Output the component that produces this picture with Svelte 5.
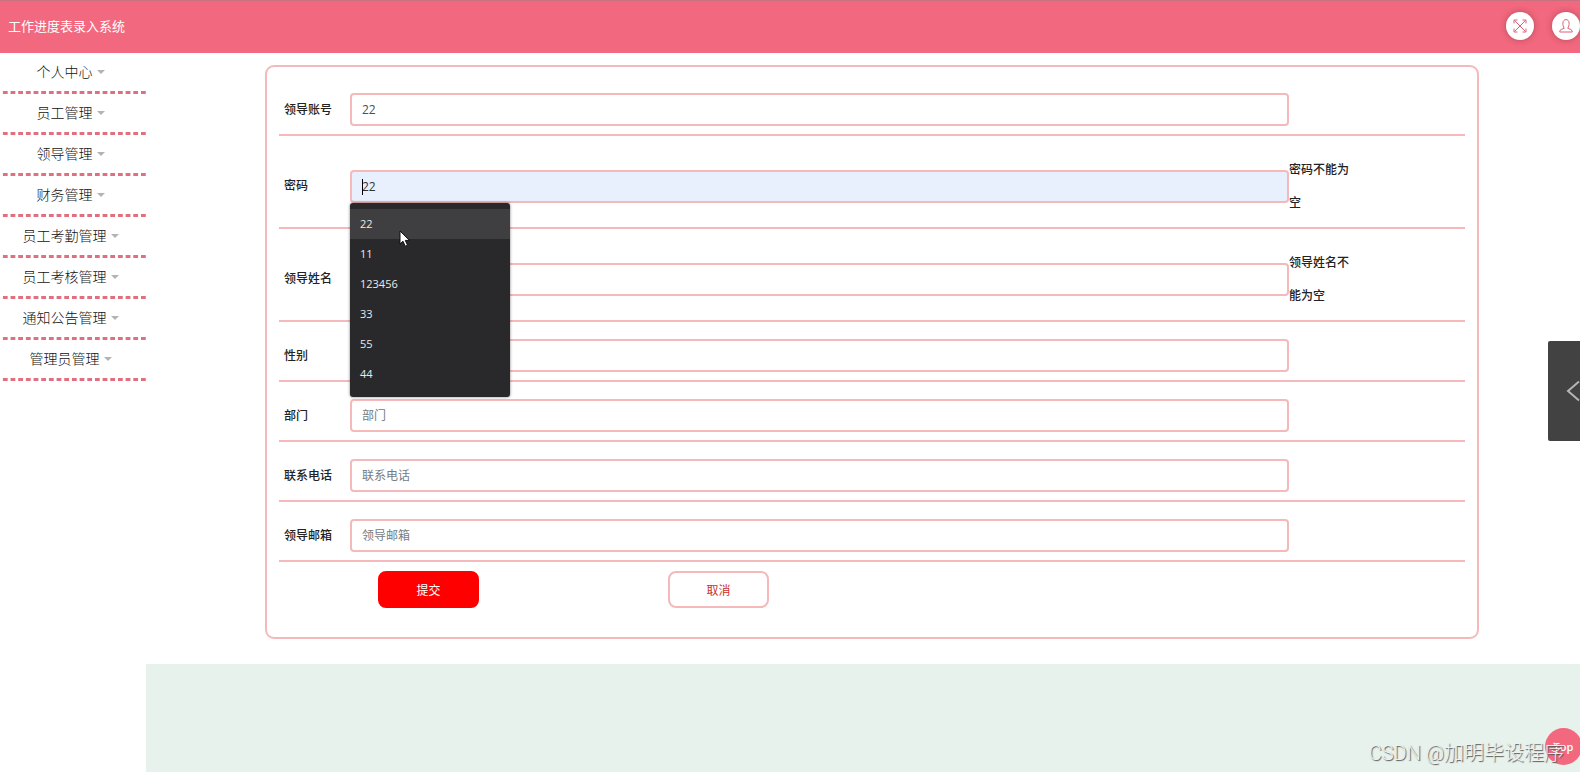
<script lang="ts">
  interface Field {
    id: string;
    label: string;
    value?: string;
    placeholder?: string;
    hint?: string;
    active?: boolean;
  }

  const MENU = ["个人中心", "员工管理", "领导管理", "财务管理", "员工考勤管理", "员工考核管理", "通知公告管理", "管理员管理"];
  const SUGGESTIONS = ["22", "11", "123456", "33", "55", "44"];

  let fields = $state<Field[]>([
    { id: "account", label: "领导账号", value: "22" },
    { id: "password", label: "密码", value: "22", hint: "密码不能为空", active: true },
    { id: "name", label: "领导姓名", value: "", hint: "领导姓名不能为空" },
    { id: "gender", label: "性别", value: "" },
    { id: "dept", label: "部门", value: "", placeholder: "部门" },
    { id: "phone", label: "联系电话", value: "", placeholder: "联系电话" },
    { id: "email", label: "领导邮箱", value: "", placeholder: "领导邮箱" },
  ]);

  let hovered = $state(0);

  function pick(field: Field, value: string) {
    field.value = value;
  }
</script>

<div class="page">
  <header class="topbar">
    <span class="brand">工作进度表录入系统</span>
    <div class="actions">
      <button type="button" class="round" aria-label="全屏">
        <svg viewBox="0 0 14 14" width="14" height="14">
          <path d="M1.5 1.5l11 11M12.5 1.5l-11 11M1 4.5V1h3.5M9.5 1H13v3.5M13 9.5V13H9.5M4.5 13H1V9.5" />
        </svg>
      </button>
      <button type="button" class="round" aria-label="用户">
        <svg viewBox="0 0 14 14" width="14" height="14">
          <path d="M5.300 9.300C4.300 8 3.800 6 3.900 4 4 1.900 5.200.6 7 .6s3 1.300 3.100 3.400c.1 2-.4 4-1.400 5.300l3.200 1.200c.9.4 1.300 1.200 1.400 2.500H.7c.1-1.300.5-2.100 1.400-2.500z" />
        </svg>
      </button>
    </div>
  </header>

  <div class="body">
    <nav class="sidebar">
      {#each MENU as item (item)}
        <a class="menu-item" href="#menu">{item}<i class="arrow"></i></a>
      {/each}
    </nav>

    <main class="main">
      <div class="sheet">
        <form class="card" onsubmit={(e) => e.preventDefault()}>
          {#each fields as field (field.id)}
            <div class="row">
              <label for={field.id}>{field.label}</label>
              <div class="control">
                <input id={field.id} class:active={field.active} type="text" autocomplete="off" placeholder={field.placeholder} bind:value={field.value} />
                {#if field.active}
                  <span class="text-caret"></span>
                  <ul class="suggest">
                    {#each SUGGESTIONS as s, i (s)}
                      <li>
                        <button type="button" class:hovered={hovered === i} onmouseenter={() => (hovered = i)} onclick={() => pick(field, s)}>{s}</button>
                      </li>
                    {/each}
                  </ul>
                  <svg class="pointer" viewBox="0 0 12 18" width="12" height="18">
                    <path d="M1 1v13l3-2.800 2.200 5 2.300-1-2.200-4.800h4.200z" />
                  </svg>
                {/if}
              </div>
              <span class="hint">{field.hint ?? ""}</span>
            </div>
          {/each}
          <div class="buttons">
            <button type="submit" class="btn submit">提交</button>
            <button type="button" class="btn cancel">取消</button>
          </div>
        </form>
      </div>
    </main>
  </div>

  <button type="button" class="drawer" aria-label="展开">
    <svg viewBox="0 0 14 22" width="14" height="22"><path d="M13 1.500L2 11l11 9.500" /></svg>
  </button>
  <a class="to-top" href="#top">Top</a>
  <div class="watermark">CSDN @加明毕设程序</div>
</div>

<style>
  :global(body) {
    margin: 0;
    overflow: hidden;
  }
  .page {
    --pink: #f2687e;
    --line: #f5b8bb;
    position: relative;
    display: flex;
    flex-direction: column;
    height: 100vh;
    overflow: hidden;
    background: #fff;
    color: #333;
    font-family: "Open Sans", "Noto Sans CJK SC", sans-serif;
    font-size: 12px;
  }
  button,
  input {
    font: inherit;
    box-sizing: border-box;
    margin: 0;
  }
  .topbar {
    display: flex;
    flex: none;
    align-items: center;
    justify-content: space-between;
    box-sizing: border-box;
    height: 53px;
    padding: 0 0 3px 8px;
    background: var(--pink);
    border-top: 1px solid #c9727f;
  }
  .brand {
    color: #fff;
    font-size: 13px;
  }
  .actions {
    display: flex;
    gap: 18px;
  }
  .round {
    display: grid;
    place-items: center;
    width: 28px;
    height: 28px;
    padding: 0;
    border: 0;
    border-radius: 50%;
    background: #fff;
    box-shadow: 0 0 6px rgba(90, 30, 40, 0.4);
  }
  .round svg {
    fill: none;
    stroke: #d9647a;
    stroke-width: 1;
  }
  .body {
    display: flex;
    flex: 1;
    min-height: 0;
  }
  .sidebar {
    flex: none;
    width: 146px;
  }
  .menu-item {
    display: flex;
    align-items: center;
    justify-content: center;
    gap: 4px;
    padding: 0 5px 3px 0;
    font-size: 14px;
    font-weight: 300;
    line-height: 38px;
    color: #111;
    text-decoration: none;
    background: linear-gradient(90deg, transparent 34%, #e0707f 34%) left bottom / calc(100% / 19) 3px repeat-x;
  }
  .arrow {
    border: 4px solid transparent;
    border-top-color: #b3b3b3;
    border-bottom: 0;
  }
  .main {
    flex: 1;
    min-width: 0;
    background: #e7f2ec;
  }
  .sheet {
    padding: 12px 101px 25px 119px;
    background: #fff;
  }
  .card {
    padding: 9px 12px 29px;
    border: 2px solid var(--line);
    border-radius: 9px;
  }
  .row {
    display: flex;
    align-items: center;
    padding: 17px 110px 8px 5px;
    border-bottom: 2px solid var(--line);
  }
  label {
    flex: none;
    width: 66px;
    color: #222;
    font-weight: 500;
    line-height: 16px;
  }
  .control {
    position: relative;
    flex: 1;
  }
  input {
    display: block;
    width: 100%;
    height: 33px;
    padding: 0 10px;
    border: 2px solid var(--line);
    border-radius: 4px;
    outline: 0;
    background: #fff;
    color: #495057;
  }
  input::placeholder {
    color: #757c83;
  }
  input.active {
    background: #e8f0fe;
    color: #333;
  }
  .hint {
    flex: none;
    width: 66px;
    line-height: 33px;
    color: #222;
    font-weight: 500;
  }
  .text-caret {
    position: absolute;
    top: 9px;
    left: 12px;
    width: 1px;
    height: 16px;
    background: #000;
  }
  .suggest {
    position: absolute;
    z-index: 2;
    top: 100%;
    left: 0;
    box-sizing: border-box;
    width: 160px;
    margin: 0;
    padding: 6px 0 8px;
    list-style: none;
    background: #29292b;
    border-radius: 3px;
    box-shadow: 0 0 3px rgba(0, 0, 0, 0.5);
  }
  .suggest button {
    display: block;
    width: 100%;
    height: 30px;
    padding: 0 10px;
    border: 0;
    background: none;
    color: #e8eaed;
    font-size: 11px;
    text-align: left;
  }
  .suggest button.hovered {
    background: #3f3f42;
  }
  .pointer {
    position: absolute;
    z-index: 3;
    top: 60px;
    left: 49px;
    fill: #fff;
    stroke: #111;
    pointer-events: none;
  }
  .buttons {
    display: flex;
    gap: 189px;
    padding: 9px 0 0 99px;
  }
  .btn {
    width: 101px;
    height: 37px;
    border: 2px solid var(--line);
    border-radius: 8px;
    background: #fff;
    color: #c9302c;
  }
  .btn.submit {
    border-color: #f00;
    background: #f00;
    color: #fff;
  }
  .drawer {
    position: absolute;
    top: 341px;
    right: 0;
    display: flex;
    align-items: center;
    justify-content: flex-end;
    width: 32px;
    height: 100px;
    padding: 0;
    border: 0;
    border-radius: 2px 0 0 2px;
    background: #424242;
  }
  .drawer svg {
    fill: none;
    stroke: #b5b5b5;
    stroke-width: 2;
  }
  .to-top {
    position: absolute;
    right: -2px;
    bottom: 7px;
    width: 37px;
    border-radius: 50%;
    background: var(--pink);
    color: #fff;
    font-size: 11px;
    font-weight: 600;
    line-height: 37px;
    text-align: center;
    text-decoration: none;
  }
  .watermark {
    position: absolute;
    right: 16px;
    bottom: 4px;
    color: #eef1ef;
    font-family: Roboto, "Noto Sans CJK SC", sans-serif;
    font-size: 20px;
    font-weight: 300;
    line-height: 30px;
    text-shadow: 1px 1px 1px #555;
    white-space: nowrap;
    pointer-events: none;
  }
</style>
